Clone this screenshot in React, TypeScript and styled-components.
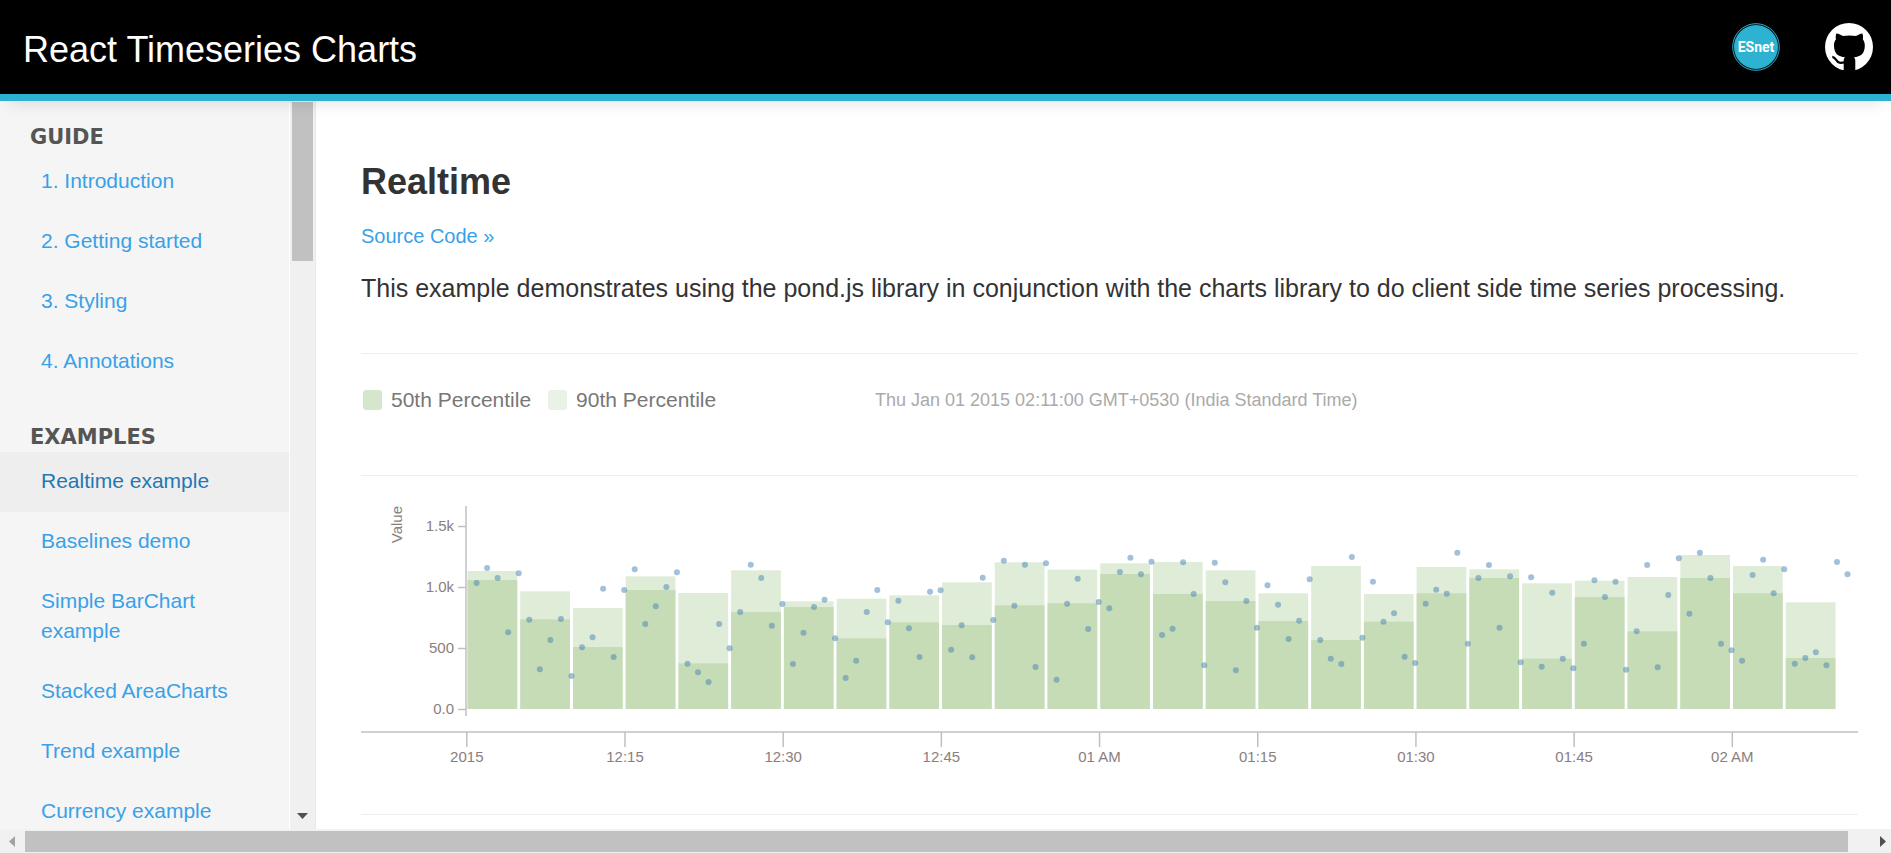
import React from "react";
import styled, { createGlobalStyle } from "styled-components";

const GlobalStyle = createGlobalStyle`
  *, *::before, *::after { box-sizing: border-box; }
  body {
    margin: 0;
    font-family: "Liberation Sans", Arial, sans-serif;
    font-size: 21px;
    line-height: 30px;
    color: #333;
    background: #fff;
    overflow: hidden;
  }
`;

const Page = styled.div`
  display: flex;
  flex-direction: column;
  height: 100vh;
`;

const Header = styled.header`
  position: relative;
  z-index: 1;
  flex: none;
  display: flex;
  align-items: center;
  justify-content: space-between;
  height: 101px;
  padding: 0 18px 0 23px;
  background: #000;
  border-bottom: 7px solid #2db3d1;
  box-shadow: 0 12px 16px -10px rgba(0, 0, 0, 0.12);
`;

const Brand = styled.a`
  padding-top: 6px;
  font-size: 36px;
  line-height: 48px;
  color: #fff;
  text-decoration: none;
`;

const HeaderLinks = styled.nav`
  display: flex;
  gap: 45px;
`;

const LogoLink = styled.a`
  display: block;
  width: 48px;
  height: 48px;
  svg { display: block; }
`;

const Body = styled.div`
  flex: 1;
  min-height: 0;
  display: flex;
`;

const Sidebar = styled.aside`
  flex: none;
  width: 290px;
  overflow: hidden;
  background: #f5f5f5;
  border-right: 1px solid #fff;
`;

const SideHeading = styled.h2`
  margin: 0;
  padding: 21px 30px 0;
  font-family: "DejaVu Sans", sans-serif;
  font-size: 21px;
  line-height: 30px;
  font-weight: 700;
  color: #555;
`;

const SideList = styled.ul`
  margin: 0 0 9px;
  padding: 0;
  list-style: none;
`;

const SideLink = styled.a<{ $active?: boolean }>`
  display: block;
  padding: 14px 50px 16px 41px;
  font-size: 21px;
  line-height: 30px;
  text-decoration: none;
  color: ${(p) => (p.$active ? "#1f78b4" : "#38a1e8")};
  background: ${(p) => (p.$active ? "#eee" : "transparent")};
`;

const VerticalTrack = styled.div`
  flex: none;
  display: flex;
  flex-direction: column;
  align-items: center;
  justify-content: space-between;
  width: 26px;
  padding: 1px 1px 10px 0;
  background: #f0f0f0;
  border-right: 1px solid #e8e8e8;
`;

const VerticalThumb = styled.div`
  width: 21px;
  height: 159px;
  background: #c1c1c1;
`;

const Main = styled.main`
  flex: 1;
  min-width: 0;
  overflow: hidden;
  padding: 0 33px 0 45px;
`;

const Title = styled.h1`
  margin: 57px 0 0;
  font-size: 36px;
  line-height: 48px;
  font-weight: 700;
`;

const SourceLink = styled.a`
  display: block;
  width: fit-content;
  margin-top: 15px;
  font-size: 20px;
  line-height: 30px;
  color: #38a1e8;
  text-decoration: none;
`;

const Description = styled.p`
  margin: 19px 0 47px;
  font-size: 25px;
  line-height: 36px;
`;

const Rule = styled.hr`
  margin: 0;
  border: 0;
  border-top: 1px solid #eee;
`;

const LegendRow = styled.section`
  display: flex;
  height: 121px;
  padding-top: 31px;
`;

const Legend = styled.ul`
  display: flex;
  gap: 17px;
  width: 514px;
  margin: 0;
  padding: 0 0 0 2px;
  list-style: none;
`;

const LegendItem = styled.li`
  display: flex;
  align-items: center;
  gap: 9px;
  height: 30px;
  font-size: 21px;
  color: #777;
`;

const Swatch = styled.span<{ $color: string }>`
  width: 19px;
  height: 20px;
  border-radius: 3px;
  background: ${(p) => p.$color};
`;

const Timestamp = styled.time`
  font-size: 18px;
  color: #aaa;
`;

const ChartSvg = styled.svg`
  display: block;
  width: 100%;
  height: auto;
  font-size: 15px;
`;

const HorizontalTrack = styled.div`
  flex: none;
  display: flex;
  align-items: center;
  gap: 10px;
  height: 24px;
  padding: 0 5px 0 9px;
  background: #f1f1f1;
`;

const HorizontalThumb = styled.div`
  flex: 1;
  height: 21px;
  margin-right: 22px;
  background: #c1c1c1;
`;

const guide = ["1. Introduction", "2. Getting started", "3. Styling", "4. Annotations"];
const examples = [
  "Realtime example",
  "Baselines demo",
  "Simple BarChart example",
  "Stacked AreaCharts",
  "Trend example",
  "Currency example",
];

/* One reading a minute, starting at 12:01, as depth below the plot's top in thirds of a unit. */
const readings = [
  159, 114, 144, 307, 130, 269, 418, 330, 267, 438, 352, 322, 176, 381, 180, 118, 282, 229, 171, 127,
  401, 427, 456, 282, 355, 246, 104, 144, 287, 222, 402, 308, 231, 209, 325, 444, 392, 246, 180, 277,
  212, 295, 381, 185, 181, 359, 286, 382, 143, 270, 92, 227, 104, 411, 100, 449, 221, 146, 297, 216,
  235, 126, 83, 133, 95, 315, 296, 97, 192, 406, 98, 157, 421, 213, 293, 166, 224, 327, 272, 148,
  330, 386, 402, 81, 323, 155, 275, 250, 380, 399, 221, 179, 191, 68, 341, 144, 105, 293, 139, 397,
  142, 410, 188, 386, 415, 341, 151, 201, 155, 419, 304, 105, 412, 195, 85, 251, 68, 144, 341, 361,
  392, 135, 89, 190, 118, 401, 384, 367, 406, 96, 133,
];

/* 90th and 50th percentile of each five-minute window, on the same scale. */
const windows = [
  [123, 150], [184, 268], [234, 351], [139, 180], [189, 400], [121, 246], [214, 231], [206, 325],
  [196, 277], [157, 285], [97, 226], [119, 220], [100, 132], [96, 192], [121, 213], [190, 273],
  [108, 330], [192, 275], [111, 190], [118, 144], [160, 386], [152, 201], [141, 304], [75, 144],
  [108, 190], [217, 384],
];

const ORIGIN = 105;
const MINUTE = 10.546;
const BASE = 233;
const depth = (v: number) => 54 + v / 3;

const yTicks = [
  { label: "1.5k", y: 50 },
  { label: "1.0k", y: 111 },
  { label: "500", y: 172 },
  { label: "0.0", y: 233 },
];
const xTicks = ["2015", "12:15", "12:30", "12:45", "01 AM", "01:15", "01:30", "01:45", "02 AM"];

function Chart() {
  return (
    <ChartSvg viewBox="0 0 1497 338" role="img" aria-label="Value over time with percentile bars">
      {windows.map(([p90, p50], i) => {
        const x = ORIGIN + i * 5 * MINUTE + 1.5;
        return (
          <g key={i}>
            <rect x={x} y={depth(p90)} width={49.7} height={BASE - depth(p90)} fill="#dfecd7" />
            <rect x={x} y={depth(p50)} width={49.7} height={BASE - depth(p50)} fill="#c5dcb7" />
          </g>
        );
      })}
      {readings.map((v, i) => (
        <circle key={i} cx={ORIGIN + (i + 1) * MINUTE} cy={depth(v)} r={3} fill="steelblue" opacity={0.5} />
      ))}
      <g stroke="#c0c0c0" strokeWidth={1.5}>
        <path d="M105 30V240" />
        <path d="M0 256H1497" />
        {yTicks.map((t) => (
          <path key={t.label} d={`M97 ${t.y + 0.5}H105`} />
        ))}
        {xTicks.map((t, i) => (
          <path key={t} d={`M${ORIGIN + 0.8 + i * 15 * MINUTE} 256V271`} />
        ))}
      </g>
      <g fill="#8b7e7e">
        {yTicks.map((t) => (
          <text key={t.label} x={93} y={t.y + 5} textAnchor="end">{t.label}</text>
        ))}
        {xTicks.map((t, i) => (
          <text key={t} x={ORIGIN + 0.8 + i * 15 * MINUTE} y={286} textAnchor="middle">{t}</text>
        ))}
        <text transform="translate(41 30) rotate(-90)" textAnchor="end">Value</text>
      </g>
    </ChartSvg>
  );
}

function EsnetLogo() {
  return (
    <svg width="48" height="48" viewBox="0 0 48 48">
      <circle cx="24" cy="24" r="23.300" fill="none" stroke="#2db3d1" strokeWidth="1" />
      <circle cx="24" cy="24" r="22" fill="#2db3d1" />
      <text x="24" y="29" textAnchor="middle" fontFamily="Roboto, sans-serif" fontWeight="700" fontSize="14" fill="#fff">ESnet</text>
    </svg>
  );
}

/* White disc with the cat's head, stem and tail in the header's black. */
function GithubLogo() {
  return (
    <svg width="48" height="48" viewBox="0 0 48 48">
      <circle cx="24" cy="24" r="24" fill="#fff" />
      <path
        d="M11.300 10.500C10.500 13 10.600 15 11 16.200C9.300 18.300 8.900 20.500 9 23C9.300 31 13.500 33.600 20 34.300C19 35.300 18.700 36.700 18.700 38V48H30.300V38C30.300 36.500 29.800 35.200 29 34.300C35.500 33.600 39.600 31 39.800 23C39.900 20.500 39.300 18.300 37.800 16.200C38.200 15 38.200 13 37.400 10.500C35 10.700 33 12 31 13C27 12.200 22 12.200 18 13C16 12 14 10.700 11.300 10.500Z"
        fill="#000"
      />
      <path d="M7.300 33.800C11 34 10.800 39 14.500 39.700C16 40 17.500 39.800 19.500 39.400" fill="none" stroke="#000" strokeWidth="2.200" />
      <path d="M14 47H34V48H14Z" fill="#000" />
    </svg>
  );
}

export default function App() {
  return (
    <Page>
      <GlobalStyle />
      <Header>
        <Brand href="#home">React Timeseries Charts</Brand>
        <HeaderLinks>
          <LogoLink href="#esnet" aria-label="ESnet"><EsnetLogo /></LogoLink>
          <LogoLink href="#github" aria-label="GitHub"><GithubLogo /></LogoLink>
        </HeaderLinks>
      </Header>
      <Body>
        <Sidebar>
          <SideHeading>GUIDE</SideHeading>
          <SideList>
            {guide.map((t) => (
              <li key={t}><SideLink href="#guide">{t}</SideLink></li>
            ))}
          </SideList>
          <SideHeading>EXAMPLES</SideHeading>
          <SideList>
            {examples.map((t, i) => (
              <li key={t}><SideLink href="#example" $active={i === 0}>{t}</SideLink></li>
            ))}
          </SideList>
        </Sidebar>
        <VerticalTrack>
          <VerticalThumb />
          <svg width="11" height="6" viewBox="0 0 11 6"><path d="M0 0H11L5.500 6Z" fill="#505050" /></svg>
        </VerticalTrack>
        <Main>
          <Title>Realtime</Title>
          <SourceLink href="#source">Source Code »</SourceLink>
          <Description>
            This example demonstrates using the pond.js library in conjunction with the charts library to do client side time series processing.
          </Description>
          <Rule />
          <LegendRow>
            <Legend>
              <LegendItem><Swatch $color="#d6e6cd" />50th Percentile</LegendItem>
              <LegendItem><Swatch $color="#e9f2e4" />90th Percentile</LegendItem>
            </Legend>
            <Timestamp dateTime="2015-01-01T02:11:00+05:30">Thu Jan 01 2015 02:11:00 GMT+0530 (India Standard Time)</Timestamp>
          </LegendRow>
          <Rule />
          <Chart />
          <Rule />
        </Main>
      </Body>
      <HorizontalTrack>
        <svg width="6" height="11" viewBox="0 0 6 11"><path d="M6 0V11L0 5.500Z" fill="#a3a3a3" /></svg>
        <HorizontalThumb />
        <svg width="6" height="11" viewBox="0 0 6 11"><path d="M0 0V11L6 5.500Z" fill="#505050" /></svg>
      </HorizontalTrack>
    </Page>
  );
}
